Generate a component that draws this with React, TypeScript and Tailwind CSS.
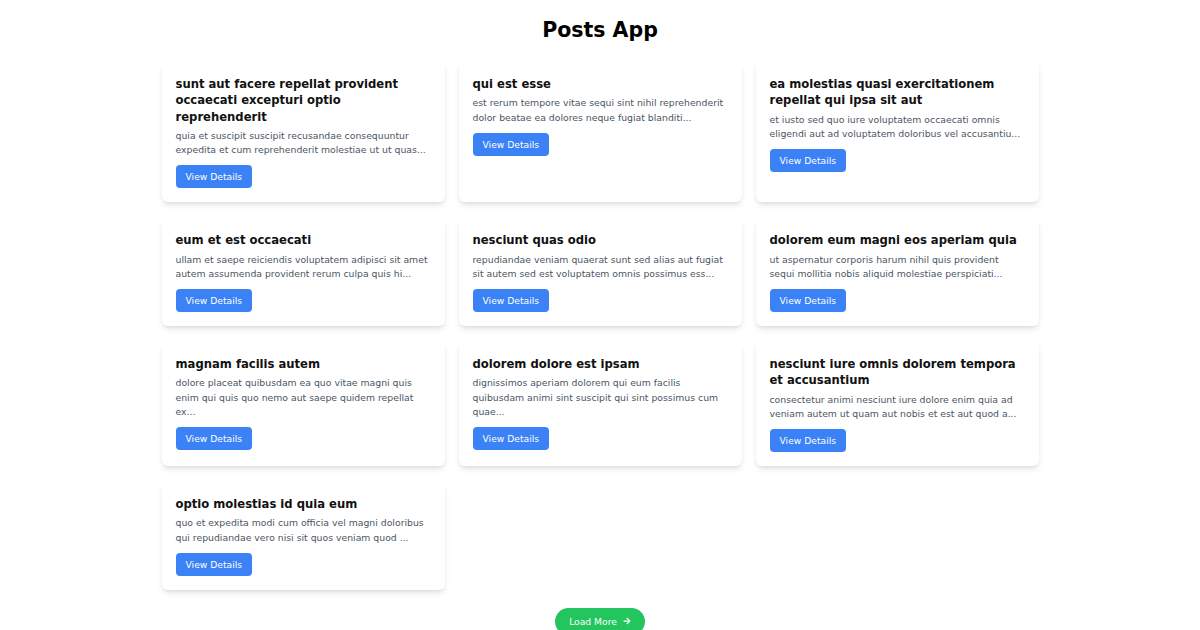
import React from 'react';
import { FaArrowRight } from 'react-icons/fa';

const posts = [
  {
    id: 1,
    title: 'sunt aut facere repellat provident occaecati excepturi optio reprehenderit',
    body: 'quia et suscipit suscipit recusandae consequuntur expedita et cum reprehenderit molestiae ut ut quas...',
  },
  {
    id: 2,
    title: 'qui est esse',
    body: 'est rerum tempore vitae sequi sint nihil reprehenderit dolor beatae ea dolores neque fugiat blanditi...',
  },
  {
    id: 3,
    title: 'ea molestias quasi exercitationem repellat qui ipsa sit aut',
    body: 'et iusto sed quo iure voluptatem occaecati omnis eligendi aut ad voluptatem doloribus vel accusantiu...',
  },
  {
    id: 4,
    title: 'eum et est occaecati',
    body: 'ullam et saepe reiciendis voluptatem adipisci sit amet autem assumenda provident rerum culpa quis hi...',
  },
  {
    id: 5,
    title: 'nesciunt quas odio',
    body: 'repudiandae veniam quaerat sunt sed alias aut fugiat sit autem sed est voluptatem omnis possimus ess...',
  },
  {
    id: 6,
    title: 'dolorem eum magni eos aperiam quia',
    body: 'ut aspernatur corporis harum nihil quis provident sequi mollitia nobis aliquid molestiae perspiciati...',
  },
  {
    id: 7,
    title: 'magnam facilis autem',
    body: 'dolore placeat quibusdam ea quo vitae magni quis enim qui quis quo nemo aut saepe quidem repellat ex...',
  },
  {
    id: 8,
    title: 'dolorem dolore est ipsam',
    body: 'dignissimos aperiam dolorem qui eum facilis quibusdam animi sint suscipit qui sint possimus cum quae...',
  },
  {
    id: 9,
    title: 'nesciunt iure omnis dolorem tempora et accusantium',
    body: 'consectetur animi nesciunt iure dolore enim quia ad veniam autem ut quam aut nobis et est aut quod a...',
  },
  {
    id: 10,
    title: 'optio molestias id quia eum',
    body: 'quo et expedita modi cum officia vel magni doloribus qui repudiandae vero nisi sit quos veniam quod ...',
  },
];

const PostCard: React.FC<{ title: string; body: string }> = ({ title, body }) => (
  <div className="bg-white rounded-md shadow-md p-[14px]">
    <h2 className="text-[11.6px] leading-[16.3px] font-bold text-[#111]">{title}</h2>
    <p className="mt-1 text-[9.3px] leading-[14.2px] text-[#4b5563]">{body}</p>
    <button className="mt-2 bg-[#3b82f6] text-white text-[9.2px] leading-[13px] px-[10px] py-[5px] rounded">
      View Details
    </button>
  </div>
);

export default function App() {
  return (
    <div className="min-h-screen bg-white font-['DejaVu_Sans',sans-serif]">
      <div className="max-w-[877px] mx-auto pt-[18px]">
        <h1 className="text-center text-[20.5px] leading-[24px] font-bold text-black mb-5">Posts App</h1>

        <div className="grid grid-cols-3 gap-x-[14px] gap-y-4">
          {posts.map((post) => (
            <PostCard key={post.id} title={post.title} body={post.body} />
          ))}
        </div>

        <div className="flex justify-center mt-[18px]">
          <button className="flex items-center gap-[6px] bg-[#22c55e] text-white text-[9.2px] leading-[13px] px-[14px] py-[7px] rounded-full">
            Load More <FaArrowRight className="w-[8px] h-[8px]" />
          </button>
        </div>
      </div>
    </div>
  );
}
